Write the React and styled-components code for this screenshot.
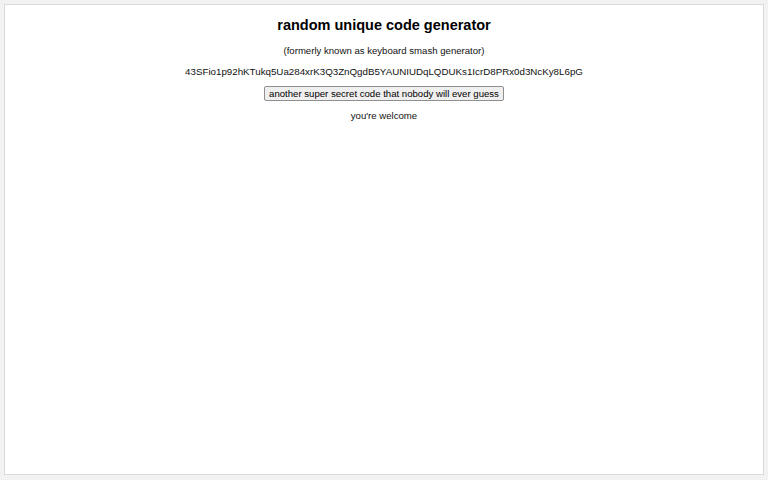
import React, { useState } from "react";
import styled, { createGlobalStyle } from "styled-components";

const Global = createGlobalStyle`
  html, body { margin: 0; padding: 0; background: #f2f2f2; }
  body { font-family: "Liberation Sans", Arial, sans-serif; color: #111; }
`;

const Page = styled.div`
  padding: 4px 4px 5px 4px;
  box-sizing: border-box;
  height: 480px;
  display: flex;
`;

const Panel = styled.main`
  flex: 1;
  background: #fff;
  border: 1px solid #dadada;
  display: flex;
  flex-direction: column;
  align-items: center;
  padding-top: 11px;
`;

const Title = styled.h1`
  margin: 0;
  font-size: 14.5px;
  line-height: 18px;
  font-weight: bold;
  color: #000;
`;

const Line = styled.p`
  margin: ${(p) => p.$gap}px 0 0;
  font-size: ${(p) => p.$size || 9.6}px;
  line-height: 14px;
  color: #111;
`;

const Button = styled.button`
  margin-top: 7px;
  font-family: inherit;
  font-size: 9.6px;
  line-height: 13px;
  padding: 0 4px;
  background: #efefef;
  border: 1px solid #8f8f8f;
  border-radius: 2px;
  color: #000;
  cursor: pointer;
`;

const CHARS = "ABCDEFGHIJKLMNOPQRSTUVWXYZabcdefghijklmnopqrstuvwxyz0123456789";
const makeCode = () =>
  Array.from({ length: 70 }, () => CHARS[Math.floor(Math.random() * CHARS.length)]).join("");

export default function App() {
  const [code, setCode] = useState(
    "43SFio1p92hKTukq5Ua284xrK3Q3ZnQgdB5YAUNIUDqLQDUKs1IcrD8PRx0d3NcKy8L6pG"
  );
  return (
    <>
      <Global />
      <Page>
        <Panel>
          <Title>random unique code generator</Title>
          <Line $gap={10}>(formerly known as keyboard smash generator)</Line>
          <Line $gap={7} $size={9.75}>{code}</Line>
          <Button onClick={() => setCode(makeCode())}>
            another super secret code that nobody will ever guess
          </Button>
          <Line $gap={8}>you're welcome</Line>
        </Panel>
      </Page>
    </>
  );
}
